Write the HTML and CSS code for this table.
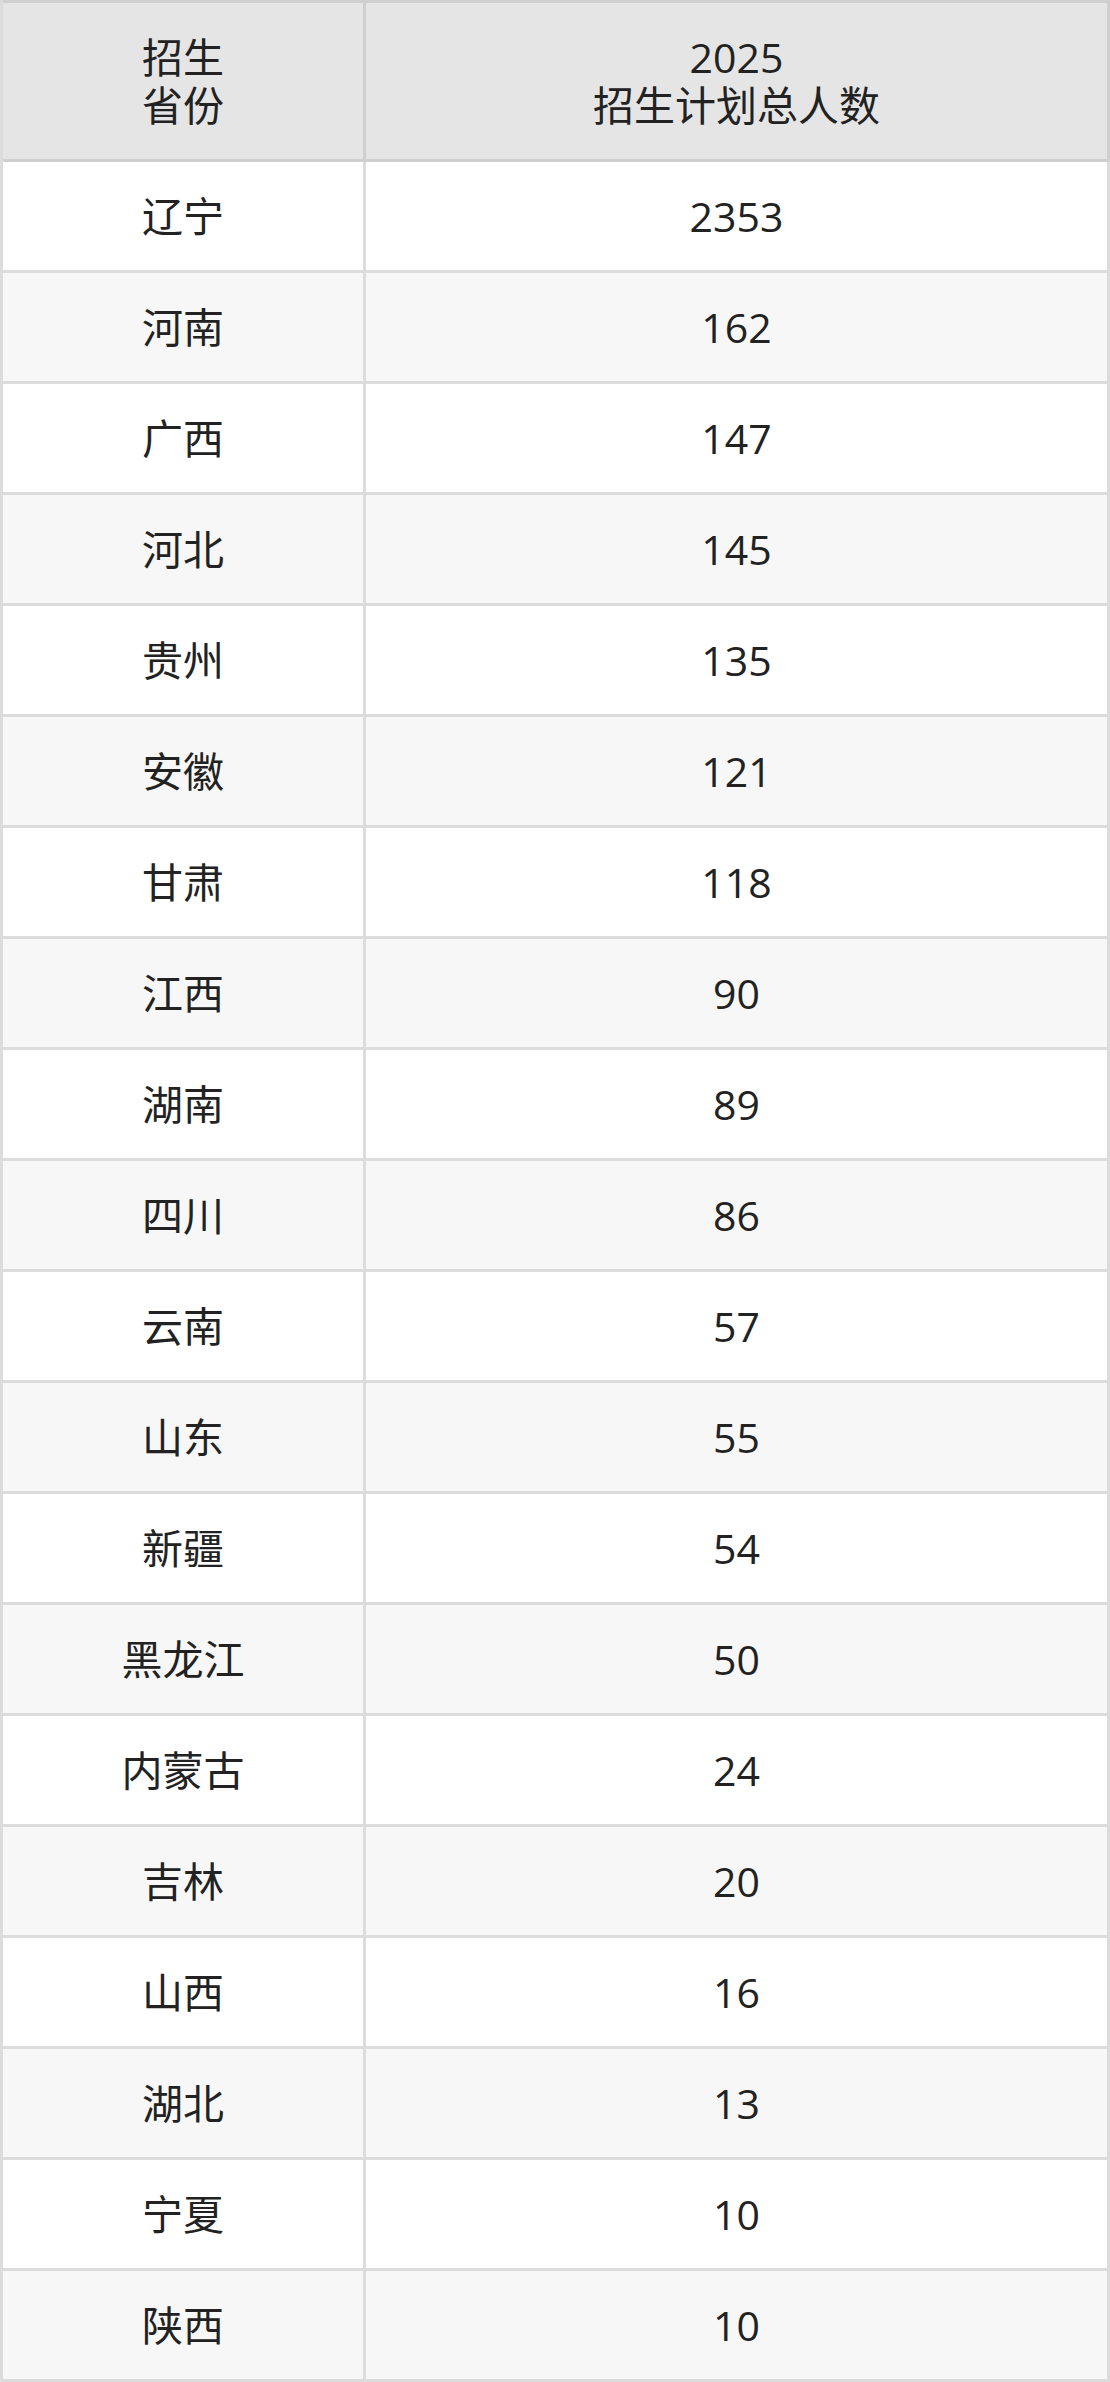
FILE: index.html
```html
<!DOCTYPE html>
<html lang="zh-CN">
<head>
<meta charset="utf-8">
<title>2025 招生计划</title>
<link rel="stylesheet" href="styles.css">
</head>
<body>
<table class="plan">
  <colgroup>
    <col class="col-prov">
    <col class="col-num">
  </colgroup>
  <thead>
    <tr><th>招生<br>省份</th><th>2025<br>招生计划总人数</th></tr>
  </thead>
  <tbody>
    <tr><td>辽宁</td><td>2353</td></tr>
    <tr><td>河南</td><td>162</td></tr>
    <tr><td>广西</td><td>147</td></tr>
    <tr><td>河北</td><td>145</td></tr>
    <tr><td>贵州</td><td>135</td></tr>
    <tr><td>安徽</td><td>121</td></tr>
    <tr><td>甘肃</td><td>118</td></tr>
    <tr><td>江西</td><td>90</td></tr>
    <tr><td>湖南</td><td>89</td></tr>
    <tr><td>四川</td><td>86</td></tr>
    <tr><td>云南</td><td>57</td></tr>
    <tr><td>山东</td><td>55</td></tr>
    <tr><td>新疆</td><td>54</td></tr>
    <tr><td>黑龙江</td><td>50</td></tr>
    <tr><td>内蒙古</td><td>24</td></tr>
    <tr><td>吉林</td><td>20</td></tr>
    <tr><td>山西</td><td>16</td></tr>
    <tr><td>湖北</td><td>13</td></tr>
    <tr><td>宁夏</td><td>10</td></tr>
    <tr><td>陕西</td><td>10</td></tr>
  </tbody>
</table>
</body>
</html>
```
FILE: styles.css
```css
html, body {
  margin: 0;
  padding: 0;
  background: #ffffff;
}

body {
  font-family: "Open Sans", "Noto Sans CJK SC", sans-serif;
  color: #222222;
}

.plan {
  width: 1110px;
  table-layout: fixed;
  border-collapse: separate;
  border-spacing: 0;
  border-left: 3px solid #dcdcdc;
  font-size: 41px;
  line-height: 48px;
}

.col-prov {
  width: 363px;
}

.col-num {
  width: 744px;
}

.plan th,
.plan td {
  padding: 30px 0;
  text-align: center;
  font-weight: normal;
  border-right: 3px solid #dcdcdc;
  border-bottom: 3px solid #dcdcdc;
}

.plan thead th {
  background: #e5e5e5;
  border-top: 3px solid #cfcfcf;
  border-bottom-color: #cfcfcf;
  border-right-color: #cfcfcf;
}

.plan tbody tr:nth-child(odd) td {
  background: #ffffff;
}

.plan tbody tr:nth-child(even) td {
  background: #f7f7f7;
}
```
